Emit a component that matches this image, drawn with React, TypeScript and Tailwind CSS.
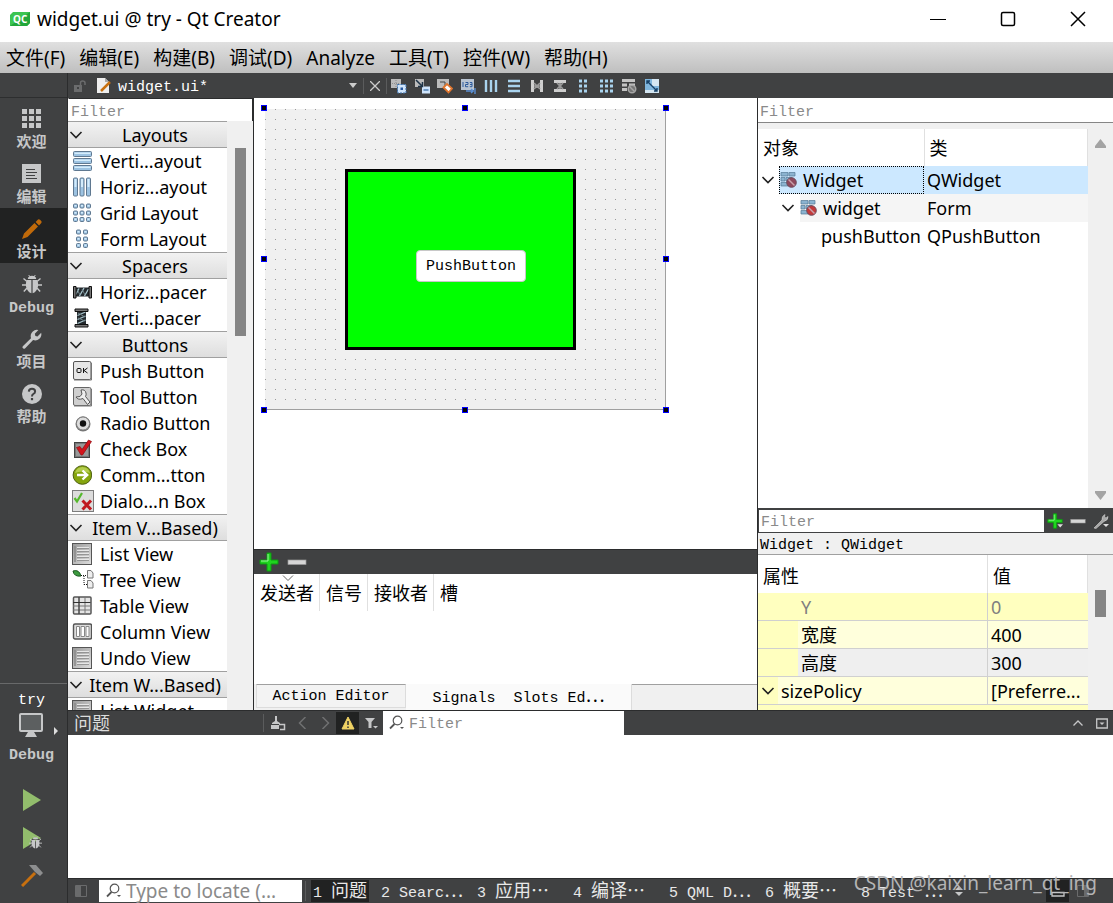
import type { ReactNode } from 'react';

const UI = "font-['Noto_Sans','Noto_Sans_CJK_SC',sans-serif]";
const MONO = "font-['Liberation_Mono','Noto_Sans_CJK_SC',monospace]";

const menus = ['文件(F)', '编辑(E)', '构建(B)', '调试(D)', 'Analyze', '工具(T)', '控件(W)', '帮助(H)'];

const modes = [
  { label: '欢迎', icon: 'welcome' },
  { label: '编辑', icon: 'edit' },
  { label: '设计', icon: 'design' },
  { label: 'Debug', icon: 'debug' },
  { label: '项目', icon: 'projects' },
  { label: '帮助', icon: 'help' },
];

const widgetGroups = [
  {
    title: 'Layouts',
    items: [
      { name: 'Verti...ayout', icon: 'vlayout' },
      { name: 'Horiz...ayout', icon: 'hlayout' },
      { name: 'Grid Layout', icon: 'grid' },
      { name: 'Form Layout', icon: 'form' },
    ],
  },
  {
    title: 'Spacers',
    items: [
      { name: 'Horiz...pacer', icon: 'hspacer' },
      { name: 'Verti...pacer', icon: 'vspacer' },
    ],
  },
  {
    title: 'Buttons',
    items: [
      { name: 'Push Button', icon: 'push' },
      { name: 'Tool Button', icon: 'tool' },
      { name: 'Radio Button', icon: 'radio' },
      { name: 'Check Box', icon: 'check' },
      { name: 'Comm...tton', icon: 'command' },
      { name: 'Dialo...n Box', icon: 'dialog' },
    ],
  },
  {
    title: 'Item V...Based)',
    items: [
      { name: 'List View', icon: 'list' },
      { name: 'Tree View', icon: 'tree' },
      { name: 'Table View', icon: 'table' },
      { name: 'Column View', icon: 'column' },
      { name: 'Undo View', icon: 'list' },
    ],
  },
  {
    title: 'Item W...Based)',
    items: [{ name: 'List Widget', icon: 'list' }],
  },
];

const properties = [
  { name: 'Y', value: '0', level: 1, row: 'bg-[#ffffbf] text-[#808080]', lead: 'bg-[#ffffbf]' },
  { name: '宽度', value: '400', level: 1, row: 'bg-[#ffffdc]', lead: 'bg-[#ffffbf]' },
  { name: '高度', value: '300', level: 1, row: 'bg-[#efefef]', lead: 'bg-[#ffffbf]' },
  { name: 'sizePolicy', value: '[Preferre...', level: 0, row: 'bg-[#ffffdc]', lead: 'bg-[#ffffbf]' },
];

const outputPanes = [
  { num: '2', name: 'Searc' },
  { num: '3', name: '应用' },
  { num: '4', name: '编译' },
  { num: '5', name: 'QML D' },
  { num: '6', name: '概要' },
  { num: '8', name: 'Test ' },
];

const editTools = [
  'editWidgets', 'editSignals', 'editBuddies', 'editTabs', 'layH', 'layV',
  'splitH', 'splitV', 'layForm', 'layGrid', 'breakLayout', 'adjust',
];

const handles = [
  'left-[-4px] top-[-4px]',
  'left-[197px] top-[-4px]',
  'right-[-4px] top-[-4px]',
  'left-[-4px] top-[147px]',
  'right-[-4px] top-[147px]',
  'left-[-4px] bottom-[-4px]',
  'left-[197px] bottom-[-4px]',
  'right-[-4px] bottom-[-4px]',
];

function Svg({ size = 20, box = 20, children }: { size?: number; box?: number; children: ReactNode }) {
  return (
    <svg width={size} height={size} viewBox={`0 0 ${box} ${box}`} fill="none" className="shrink-0" aria-hidden="true">
      {children}
    </svg>
  );
}

function Chevron({ color = '#222' }: { color?: string }) {
  return (
    <svg width="14" height="8" viewBox="0 0 14 8" fill="none" className="shrink-0" aria-hidden="true">
      <path d="M1.5 1 L7 6.5 L12.5 1" stroke={color} strokeWidth="1.6" />
    </svg>
  );
}

function Cells({ xs, ys, w, h }: { xs: number[]; ys: number[]; w: number; h: number }) {
  return (
    <>
      {ys.map((y) =>
        xs.map((x) => (
          <g key={`${x}-${y}`}>
            <rect x={x} y={y} width={w} height={h} rx="1" fill="#9dc3e2" stroke="#5f7890" />
            <rect x={x + 1} y={y + 1} width={w - 2} height={Math.max(1.5, h / 2 - 1)} fill="#d4ecfb" />
          </g>
        ))
      )}
    </>
  );
}

function Bug() {
  return (
    <>
      <path d="M6.5 4.8 Q6.8 3.2 8 2.6 L6.6 1 M13.5 4.8 Q13.2 3.2 12 2.6 L13.4 1" stroke="currentColor" />
      <path d="M5.8 5 Q6.500 1.8 10 1.8 Q13.500 1.8 14.200 5Z" fill="currentColor" />
      <path d="M9.4 6 H4.800 Q3.400 9 4 12.500 Q5.400 18.200 9.400 19.200Z M10.600 6 H15.200 Q16.600 9 16 12.500 Q14.600 18.200 10.600 19.200Z" fill="currentColor" />
      <path d="M5 7.5 L1.5 4.5 M15 7.5 L18.5 4.5 M4.5 11 H0 M15.5 11 H20 M5 14 L1.8 17.5 M15 14 L18.200 17.5" stroke="currentColor" strokeWidth="1.4" />
    </>
  );
}

function ModeIcon({ name }: { name: string }) {
  switch (name) {
    case 'welcome':
      return (
        <Svg>
          {[0, 7, 14].map((y) => [0, 7, 14].map((x) => <rect key={`${x}-${y}`} x={x} y={y} width="5" height="5" fill="#c6c7c8" />))}
        </Svg>
      );
    case 'edit':
      return (
        <Svg>
          <rect width="19" height="19" fill="#c6c7c8" />
          <path d="M4 5.5H13 M4 8.5H15 M4 11.5H13 M4 14.5H15" stroke="#404142" strokeWidth="1.2" />
        </Svg>
      );
    case 'design':
      return (
        <Svg>
          <path d="M0 20 L2 14.5 L12.5 4 L16 7.5 L5.5 18Z M13.6 3 L16 .6 Q17 0 18 .8 L19.4 2.2 Q20 3 19.3 4 L17 6.4Z" fill="#c06a0a" />
        </Svg>
      );
    case 'debug':
      return (
        <Svg>
          <Bug />
        </Svg>
      );
    case 'projects':
      return (
        <Svg>
          <path d="M.8 17.3 L9 9.2 Q7.8 5.2 10.8 2.4 Q13.2 .2 16.4 1.1 L12.8 4.7 L13.4 6.9 L15.5 7.4 L19.2 3.8 Q20 7.4 17.4 9.8 Q14.6 12.2 11.1 11 L3 19.4 Q1.5 20 .7 19 Q.1 18.2 .8 17.3Z" fill="#c6c7c8" />
        </Svg>
      );
    default:
      return (
        <Svg>
          <circle cx="10" cy="10" r="10" fill="#c6c7c8" />
          <path d="M6.8 7.6 Q7 4.8 10 4.8 Q13.1 4.8 13.1 7.4 Q13.1 9 11.3 10 Q10 10.8 10 12.4" stroke="#404142" strokeWidth="2" />
          <rect x="8.9" y="14" width="2.2" height="2.2" fill="#404142" />
        </Svg>
      );
  }
}

function WidgetIcon({ name }: { name: string }) {
  switch (name) {
    case 'vlayout':
      return (
        <Svg>
          <Cells xs={[1.5]} ys={[0.5, 7.5, 14.5]} w={18} h={5} />
        </Svg>
      );
    case 'hlayout':
      return (
        <Svg>
          <Cells xs={[1.5, 8, 14.5]} ys={[1]} w={4} h={18} />
        </Svg>
      );
    case 'grid':
      return (
        <Svg>
          <Cells xs={[1.5, 8, 14.5]} ys={[1, 8, 14.5]} w={4} h={4} />
        </Svg>
      );
    case 'form':
      return (
        <Svg>
          <Cells xs={[4.5, 11.5]} ys={[1, 8, 14.5]} w={4} h={4} />
        </Svg>
      );
    case 'hspacer':
      return (
        <Svg>
          <path d="M3 5.500H17.500V14.500H3Z" fill="#23292d" />
          <path d="M3.500 13L7 6.500 M7.500 14L12 6 M12.500 14L16.500 7" stroke="#a9c6ce" strokeWidth="1.300" />
          <path d="M5 7L8 13 M10 7L13 13" stroke="#6f8288" />
          <path d="M1.500 4.500H4V16H1.500Z M17 4.500H19.500V16H17Z" fill="#777" stroke="#111" />
        </Svg>
      );
    case 'vspacer':
      return (
        <Svg>
          <path d="M5 3H14V17H5Z" fill="#23292d" />
          <path d="M5.500 7.500L13.500 4 M5.500 11.500L13.500 8 M5.500 15.500L13.500 12" stroke="#a9c6ce" strokeWidth="1.300" />
          <path d="M6 5L13 9 M6 10L13 13" stroke="#6f8288" />
          <path d="M3 1H16V3.500H3Z M3 16.500H16V19H3Z" fill="#777" stroke="#111" />
        </Svg>
      );
    case 'push':
      return (
        <Svg>
          <rect x="1.5" y=".5" width="17.5" height="18" rx="1.5" fill="#e6e6e6" stroke="#555" />
          <path d="M2 19H19.5V2" stroke="#777" />
          <rect x="5" y="7.5" width="4" height="4" rx="1" stroke="#111" />
          <path d="M11.5 7V12 M15.5 7L12 9.5L15.5 12" stroke="#111" />
        </Svg>
      );
    case 'tool':
      return (
        <Svg>
          <rect x="1.5" y=".5" width="17.5" height="18" rx="1.5" fill="#cfcfcf" stroke="#666" />
          <path d="M2 19H19.5V2" stroke="#777" />
          <path d="M9 3 Q13 2 14 6 Q14.5 8 13.5 9.5 L18 15 L15.5 17.5 L11 11.5 Q6 13.5 4 10 L8 9.5 L10 7Z" fill="#eee" stroke="#555" />
        </Svg>
      );
    case 'radio':
      return (
        <Svg>
          <circle cx="11" cy="11" r="7.5" fill="#777" />
          <circle cx="11" cy="10.5" r="6.6" fill="#ddd" stroke="#777" />
          <circle cx="11" cy="10.5" r="3.2" fill="#111" />
        </Svg>
      );
    case 'check':
      return (
        <Svg>
          <rect x="2.5" y="3.5" width="15" height="15" fill="#777" stroke="#444" />
          <rect x="4" y="5" width="12" height="12" fill="#999" />
          <path d="M4.5 8.5 L8 7.5 L10 10.5 L16.5 1 L19.5 2.5 L10.5 16 L9 16Z" fill="#d3141c" stroke="#8c0d12" strokeWidth=".7" />
        </Svg>
      );
    case 'command':
      return (
        <Svg>
          <circle cx="10.4" cy="10" r="9.3" fill="#85a50e" stroke="#4e5f12" />
          <path d="M3 8 Q4.5 2.2 10.4 2 Q16.4 2.2 18 8 Q10 5 3 8Z" fill="#b4cd4e" />
          <path d="M5 10H14.5 M10.5 5.5L15.2 10L10.5 14.5" stroke="#fff" strokeWidth="2.4" />
        </Svg>
      );
    case 'dialog':
      return (
        <Svg size={22} box={22}>
          <rect x=".5" y=".5" width="21" height="21" fill="#dcdcdc" stroke="#7c7c7c" />
          <path d="M2.5 8 L5 11.5 L10 3" stroke="#55b82c" strokeWidth="2.2" />
          <path d="M10.5 10.5 L19 19.5 M19 10.5 L10.5 19.5" stroke="#c01820" strokeWidth="3" />
        </Svg>
      );
    case 'tree':
      return (
        <Svg size={22} box={22}>
          <path d="M1 2 Q7 0 9 7 Q2 8 1 2Z" fill="#3c9a3f" stroke="#1c5a22" />
          <path d="M9 6.5H14 M12 7V15.5 M12 15.5H15" stroke="#111" strokeDasharray="1 1" />
          <path d="M15.5 1.5H19L21 4V9H15.5Z M15.5 11.5H19L21 14V19H15.5Z" fill="#eee" stroke="#777" />
        </Svg>
      );
    case 'table':
      return (
        <Svg>
          <rect x="1.5" y="1" width="17.5" height="17" rx="1" fill="#e4e4e4" stroke="#555" strokeWidth="1.5" />
          <path d="M1 6.5H18.5 M1 10H18.5 M1 14H18.5 M7 1V18 M13 1V18" stroke="#777" />
          <path d="M1 6.5H18.5 M7 1V18" stroke="#333" />
        </Svg>
      );
    case 'column':
      return (
        <Svg>
          <rect x="1.5" y="2" width="18" height="15" rx="1.5" fill="#ddd" stroke="#555" strokeWidth="1.4" />
          <path d="M4.5 4.5H7.5V14.5H4.5Z M9 4.5H12.5V14.5H9Z M14 4.5H17V14.5H14Z" fill="#fff" stroke="#888" />
        </Svg>
      );
    default:
      return (
        <Svg size={22} box={22}>
          <defs>
            <linearGradient id="listShade" x1="0" y1="0" x2="1" y2="1">
              <stop offset="0" stopColor="#9a9a9a" />
              <stop offset="1" stopColor="#dedede" />
            </linearGradient>
          </defs>
          <rect x=".5" y=".5" width="19" height="21" fill="url(#listShade)" stroke="#555" />
          <path d="M3 3V19" stroke="#888" strokeWidth="1.4" />
          <path d="M5 4.5H17 M5 7.5H17 M5 10.5H17 M5 13.5H17 M5 16.5H17" stroke="#e6e6e6" />
          <path d="M5 5.5H17 M5 8.5H17 M5 11.5H17 M5 14.5H17 M5 17.5H17" stroke="#8a8a8a" strokeWidth=".8" />
        </Svg>
      );
  }
}

function EditIcon({ name }: { name: string }) {
  const blue = '#a9d3ee';
  switch (name) {
    case 'editWidgets':
      return (
        <>
          <path d="M0 1H10V10H0Z" fill="#bcbcbc" />
          <path d="M1 5.500H9 M5 2V9" stroke="#8f8f8f" strokeDasharray="1 1" />
          <path d="M6.5 6.5H15V15H6.5Z" fill="#cfe4fb" stroke="#3a6ea8" strokeDasharray="2 1" />
          <rect x="9.5" y="9.5" width="2.5" height="2.5" fill="#2457a0" />
        </>
      );
    case 'editSignals':
      return (
        <>
          <path d="M1 1H10V9H1Z" fill="#bcbcbc" />
          <path d="M8 8.500H16V15.500H8Z" fill="#cfe4fb" />
          <path d="M9.500 12H14.500" stroke="#3a6ea8" strokeWidth="1.300" />
          <path d="M2 2 L8.500 8.500 M8.500 4V8.500H4" stroke="#1d3348" strokeWidth="1.500" />
        </>
      );
    case 'editBuddies':
      return (
        <>
          <path d="M0 1H12V10H0Z" fill="#bcbcbc" />
          <path d="M3 4H8V8" stroke="#444" />
          <path d="M6.5 9.5 L10 6 L15 10.5 L11.5 14.5Z" fill="#fff" stroke="#e0762e" strokeWidth="1.8" />
        </>
      );
    case 'editTabs':
      return (
        <>
          <path d="M1 1H14V12H1Z" fill="#b9c4d2" />
          <path d="M3 4V9 M5.5 4.5H8V6.5H5.5V8.7H8.2 M9.8 4.5H12V8.7H9.8 M10 6.5H12" stroke="#2c5a9c" />
          <path d="M6 13H13 M11 11L13.2 13L11 15 M15 10V16" stroke="#5a8fd4" strokeWidth="1.4" />
        </>
      );
    case 'layH':
      return <path d="M3 2V14 M8 2V14 M13 2V14" stroke={blue} strokeWidth="2.4" />;
    case 'layV':
      return <path d="M2 3H14 M2 8H14 M2 13H14" stroke={blue} strokeWidth="2.4" />;
    case 'splitH':
      return (
        <>
          <path d="M2 2H5V14H2Z M11 2H14V14H11Z" fill="#cfcfcf" />
          <path d="M5 5L8 8L5 11 M11 5L8 8L11 11 M5 8H11" stroke="#9a9a9a" strokeWidth="1.6" />
        </>
      );
    case 'splitV':
      return (
        <>
          <path d="M2 2H14V5H2Z M2 11H14V14H2Z" fill="#cfcfcf" />
          <path d="M5 5L8 8L11 5 M5 11L8 8L11 11 M8 5V11" stroke="#9a9a9a" strokeWidth="1.6" />
        </>
      );
    case 'layForm':
      return <path d="M4 3H7 M9 3H12 M4 8H7 M9 8H12 M4 13H7 M9 13H12" stroke={blue} strokeWidth="3" />;
    case 'layGrid':
      return <path d="M2 3H5 M7 3H10 M12 3H15 M2 8H5 M7 8H10 M12 8H15 M2 13H5 M7 13H10 M12 13H15" stroke={blue} strokeWidth="3" />;
    case 'breakLayout':
      return (
        <>
          <path d="M1 2.5H14 M1 7H6 M8 7H14 M1 11.5H6" stroke="#c4c4c4" strokeWidth="3" />
          <circle cx="11" cy="11" r="3.8" fill="#777" stroke="#a6a6a6" strokeWidth="1.4" />
          <path d="M8.5 8.5L13.5 13.5" stroke="#a6a6a6" strokeWidth="1.4" />
        </>
      );
    default:
      return (
        <>
          <path d="M1 1H15V15H1Z" fill="#7fb6de" />
          <path d="M8 1H15V8H8Z M1 12H15V15H1Z" fill="#d4e6f2" />
          <path d="M3 3L13 13 M3 6V3H6 M13 10V13H10" stroke="#153f66" strokeWidth="1.4" />
        </>
      );
  }
}

function ObjectIcon({ tint }: { tint: string }) {
  return (
    <Svg size={18} box={18}>
      <path d="M1 1.5H8V5H1Z M9 1.5H15V5H9Z M1 6.5H5V10H1Z M6 6.5H12V10H6Z M1 11.5H8V15H1Z" fill="#8bb3d0" stroke="#557a96" strokeWidth=".7" />
      <circle cx="11.5" cy="11.5" r="4.8" fill={tint} stroke="#6c4a5c" />
      <path d="M8.5 8.5L14.5 14.5" stroke="#c9a2ac" strokeWidth="1.4" />
    </Svg>
  );
}

function Search() {
  return (
    <Svg size={18} box={18}>
      <circle cx="9.5" cy="6.5" r="4.3" stroke="#555" strokeWidth="1.2" />
      <path d="M6.5 10L2 14.5" stroke="#555" strokeWidth="1.8" />
      <path d="M12 13H16L14 15Z" fill="#555" />
    </Svg>
  );
}

function Plus({ size = 20, arrow = false }: { size?: number; arrow?: boolean }) {
  return (
    <Svg size={size}>
      <path d="M8 1H12V8H19V12H12V19H8V12H1V8H8Z" fill="#1fd41f" stroke="#0c9c10" />
      <path d="M9 2V9H2" stroke="#9cf59c" />
      {arrow && <path d="M13 14H20L16.5 18Z" fill="#ddd" />}
    </Svg>
  );
}

function Minus({ size = 20 }: { size?: number }) {
  return (
    <Svg size={size}>
      <rect x="1" y="8" width="18" height="4.5" fill="#d6d6d6" stroke="#999" strokeWidth=".7" />
    </Svg>
  );
}

function TitleBar() {
  return (
    <header className="flex h-[42px] shrink-0 items-center bg-white pb-1 pl-2.5">
      <svg width="20" height="14" viewBox="0 0 20 14" className="mr-[7px] shrink-0" aria-hidden="true">
        <path d="M3 0H20V11L17 14H0V3Z" fill="#3cc451" />
        <path d="M0 14L20 0V11L17 14Z" fill="#22a63a" />
        <text x="3" y="11" fontSize="10" fontWeight="bold" fill="#fff" fontFamily="Noto Sans">QC</text>
      </svg>
      <h1 className="flex-1 text-[19px] leading-6">widget.ui @ try - Qt Creator</h1>
      <button aria-label="Minimize" className="flex h-full w-[70px] items-center justify-center">
        <Svg size={16} box={16}><path d="M0 8.5H16" stroke="#000" /></Svg>
      </button>
      <button aria-label="Maximize" className="flex h-full w-[70px] items-center justify-center">
        <Svg size={16} box={16}><rect x="1.5" y="1.5" width="13" height="13" rx="1.5" stroke="#000" strokeWidth="1.5" /></Svg>
      </button>
      <button aria-label="Close" className="flex h-full w-[70px] items-center justify-center">
        <Svg size={16} box={16}><path d="M1 1L15 15M15 1L1 15" stroke="#000" strokeWidth="1.5" /></Svg>
      </button>
    </header>
  );
}

function ModeBar() {
  return (
    <aside className={`flex w-[68px] shrink-0 flex-col border-r border-[#2b2c2d] bg-[#404142] font-bold text-[#c6c7c8] ${MONO}`}>
      <div className="h-[25px] shrink-0 border-b border-[#2d2e2f]" />
      <nav className="flex flex-col">
        {modes.map((mode) => (
          <button
            key={mode.label}
            className={`flex h-[55px] flex-col items-center gap-1 pr-1 pt-[11px] text-[15px] leading-[22px] ${
              mode.icon === 'design' ? 'bg-[#212222]' : ''
            }`}
          >
            <ModeIcon name={mode.icon} />
            {mode.label}
          </button>
        ))}
      </nav>
      <div className="mt-auto flex shrink-0 flex-col items-center border-t border-[#68696a] pr-1 pt-1.5 text-[15px]">
        <span className="font-normal leading-[22px] text-white">try</span>
        <button className="relative mt-px flex flex-col items-center gap-2 leading-[22px]">
          <svg width="24" height="24" viewBox="0 0 24 24" aria-hidden="true">
            <rect x="1" y="1" width="22" height="17" rx="1" fill="#5c5f60" stroke="#c6c7c8" strokeWidth="2" />
            <path d="M9 19H15L18 24H6Z" fill="#c6c7c8" />
          </svg>
          <svg className="absolute -right-1 top-[14px]" width="4" height="8" viewBox="0 0 4 8" aria-hidden="true">
            <path d="M0 0L4 4L0 8Z" fill="#ddd" />
          </svg>
          Debug
        </button>
        <button aria-label="Run" className="mt-[22px]">
          <Svg size={22} box={22}><path d="M2 0L20 11L2 22Z" fill="#92bd6c" /></Svg>
        </button>
        <button aria-label="Start Debugging" className="mt-4">
          <Svg size={22} box={22}>
            <path d="M2 0L20 11L2 22Z" fill="#92bd6c" />
            <g transform="translate(8 9) scale(.65)" stroke="#404142" strokeWidth="3"><circle cx="10" cy="10" r="6" /></g>
            <g transform="translate(8 9) scale(.65)"><Bug /></g>
          </Svg>
        </button>
        <button aria-label="Build" className="mb-4 mt-4">
          <Svg size={22} box={22}>
            <path d="M1 21L14 8" stroke="#c8700f" strokeWidth="3" />
            <path d="M8 0H15L22 8L19 11L14 7Z" fill="#8d8e8f" />
          </Svg>
        </button>
      </div>
    </aside>
  );
}

function DocumentBar() {
  return (
    <div className="flex h-[25px] shrink-0 items-center bg-[#404142]">
      <div className="flex w-[295px] items-center px-1.5">
        <Svg size={12} box={12}>
          <path d="M0 5H8V12H0Z" fill="#6b6c6d" />
          <path d="M6.5 5V3Q6.5 1 8.5 1Q11 1 11 3V5" stroke="#6b6c6d" strokeWidth="1.5" />
          <rect x="3" y="7" width="2" height="2" fill="#404142" />
        </Svg>
        <span className="ml-2.5">
          <Svg size={15} box={15}>
            <path d="M1 0H9L13 4V15H1Z" fill="#eee" />
            <path d="M9 0V4H13Z" fill="#aaa" />
            <path d="M5 13L14 4" stroke="#c8700f" strokeWidth="2.5" />
          </Svg>
        </span>
        <button className={`flex flex-1 items-center justify-between pl-[7px] text-[15px] leading-6 text-white ${MONO}`}>
          <span className="pt-1">widget.ui*</span>
          <svg width="8" height="5" viewBox="0 0 8 5" aria-hidden="true"><path d="M0 0H8L4 5Z" fill="#ccc" /></svg>
        </button>
      </div>
      <button aria-label="Close document" className="flex h-4 w-6 items-center justify-center border-x border-[#5b5c5d]">
        <Svg size={10} box={10}><path d="M0 0L10 10M10 0L0 10" stroke="#ccc" strokeWidth="1.3" /></Svg>
      </button>
      <div className="flex gap-[7px] pl-1">
        {editTools.map((tool) => (
          <button key={tool} aria-label={tool}>
            <Svg size={16} box={16}>
              <EditIcon name={tool} />
            </Svg>
          </button>
        ))}
      </div>
    </div>
  );
}

function WidgetBox() {
  return (
    <section className="flex w-[185px] shrink-0 flex-col overflow-hidden bg-white">
      <input
        aria-label="Filter widgets"
        placeholder="Filter"
        className={`h-6 shrink-0 border border-[#2b2c2d] border-l-transparent bg-white px-0.5 pt-1 text-[15px] outline-none placeholder:text-[#8a8a8a] ${MONO}`}
      />
      <div className="-mt-px flex min-h-0 flex-1">
        <div className="w-[159px] shrink-0 overflow-hidden">
          {widgetGroups.map((group) => (
            <div key={group.title}>
              <button className="flex h-[27px] w-full items-center border-b border-t border-[#a0a0a0] bg-linear-to-b from-[#f2f2f2] to-[#dedede] pl-px text-[18px] leading-6">
                <Chevron />
                <span className="flex-1 whitespace-nowrap text-center">{group.title}</span>
              </button>
              <ul>
                {group.items.map((item) => (
                  <li key={item.name} className="flex h-[26px] items-center text-[18px] leading-6">
                    <span className="flex w-8 shrink-0 pl-1"><WidgetIcon name={item.icon} /></span>
                    <span className="whitespace-nowrap">{item.name}</span>
                  </li>
                ))}
              </ul>
            </div>
          ))}
        </div>
        <div className="flex flex-1 justify-center bg-[#f0f0f0] pt-[27px]">
          <div className="h-[188px] w-[11px] bg-[#858585]" />
        </div>
      </div>
    </section>
  );
}

function FormCanvas() {
  return (
    <div className="min-h-0 flex-1 overflow-hidden bg-white">
      <div className="relative ml-[11px] mt-[11px] h-[301px] w-[401px] border-b border-r border-[#a0a0a0] bg-[#f0f0f0] bg-[conic-gradient(from_270deg_at_1px_1px,#9a9a9a_90deg,transparent_0)] bg-[length:10px_10px]">
        <div className="absolute left-20 top-[60px] h-[181px] w-[231px] border-[3px] border-black bg-[#00ff00]">
          <button className={`absolute left-[68px] top-[78px] h-8 w-[110px] rounded border border-[#c8c8c8] bg-white pt-0.5 text-[15px] ${MONO}`}>
            PushButton
          </button>
        </div>
        {handles.map((pos) => (
          <span key={pos} className={`absolute size-1.5 border border-[#0000ff] bg-black ${pos}`} />
        ))}
      </div>
    </div>
  );
}

function SignalEditor() {
  return (
    <>
      <div className="flex h-[25px] shrink-0 items-center gap-2 border-t border-[#2b2c2d] bg-[#404142] pl-[5px]">
        <button aria-label="Add connection"><Plus /></button>
        <button aria-label="Remove connection"><Minus /></button>
      </div>
      <div className="relative h-[110px] shrink-0 bg-white">
        <svg className="absolute left-7 top-px" width="12" height="6" viewBox="0 0 12 6" fill="none" aria-hidden="true">
          <path d="M1 .5L6 5.5L11 .5" stroke="#666" />
        </svg>
        <table className="text-[18px] leading-6">
          <thead>
            <tr className="h-[37px]">
              <th className="border-r border-[#e0e0e0] pl-1.5 pr-[5px] font-normal">发送者</th>
              <th className="border-r border-[#e0e0e0] pl-1.5 pr-[5px] font-normal">信号</th>
              <th className="border-r border-[#e0e0e0] pl-1.5 pr-[5px] font-normal">接收者</th>
              <th className="pl-1.5 font-normal">槽</th>
            </tr>
          </thead>
        </table>
      </div>
      <div className={`flex h-[26px] shrink-0 bg-[#f0f0f0] text-[15px] leading-6 ${MONO}`}>
        <button className="ml-0.5 h-6 w-[150px] border border-[#dcdcdc] border-t-[#a0a0a0] bg-[#f3f3f3] pt-px leading-[22px]">Action Editor</button>
        <button className="w-[226px] whitespace-pre border-r border-[#dcdcdc] bg-[#fafafa] pt-px">
          Signals  Slots Ed<span className="font-['Noto_Sans_CJK_SC',sans-serif] text-[18px] leading-none">⋯</span>
        </button>
        <div className="flex-1 border-t border-[#a0a0a0]" />
      </div>
    </>
  );
}

function ObjectInspector() {
  return (
    <div className="flex min-h-0 flex-1 flex-col bg-[#f0f0f0]">
      <input
        aria-label="Filter objects"
        placeholder="Filter"
        className={`h-[25px] w-full shrink-0 border-b border-[#868686] bg-white px-0.5 pt-1 text-[15px] outline-none placeholder:text-[#8a8a8a] ${MONO}`}
      />
      <div className="mt-1.5 flex min-h-0 flex-1">
        <div className="flex-1 bg-white">
          <table className="w-full table-fixed text-[18px] leading-6">
            <colgroup>
              <col className="w-[166px]" />
              <col />
            </colgroup>
            <thead>
              <tr className="h-[37px] text-left">
                <th className="border-r border-[#e0e0e0] pl-[5px] font-normal">对象</th>
                <th className="border-r border-[#e0e0e0] pl-[5px] font-normal">类</th>
              </tr>
            </thead>
            <tbody>
              <tr className="h-7">
                <td>
                  <div className="flex items-center gap-1 pl-[3px]">
                    <Chevron />
                    <span className="flex h-7 flex-1 items-center gap-[5px] border border-dotted border-black bg-[#cce8ff]">
                      <ObjectIcon tint="#8e4a5e" />
                      Widget
                    </span>
                  </div>
                </td>
                <td className="bg-[#cce8ff] pl-[3px]">QWidget</td>
              </tr>
              <tr className="h-7">
                <td>
                  <div className="flex items-center gap-[5px] pl-[23px]">
                    <Chevron />
                    <span className="flex h-7 flex-1 items-center gap-[5px] bg-[#f5f5f5]">
                      <ObjectIcon tint="#c43a3a" />
                      widget
                    </span>
                  </div>
                </td>
                <td className="bg-[#f5f5f5] pl-[3px]">Form</td>
              </tr>
              <tr className="h-7">
                <td className="whitespace-nowrap pl-[63px]">pushButton</td>
                <td className="pl-[3px]">QPushButton</td>
              </tr>
            </tbody>
          </table>
        </div>
        <div className="flex w-[25px] flex-col items-center justify-between bg-[#f0f0f0] pb-2 pt-2.5">
          <svg width="11" height="9" viewBox="0 0 11 9" aria-hidden="true"><path d="M5.5 0L11 7V9H0V7Z" fill="#a3a3a3" /></svg>
          <svg width="11" height="9" viewBox="0 0 11 9" aria-hidden="true"><path d="M5.5 9L11 2V0H0V2Z" fill="#a3a3a3" /></svg>
        </div>
      </div>
    </div>
  );
}

function PropertyEditor() {
  return (
    <div className="flex h-[202px] shrink-0 flex-col overflow-hidden bg-[#f0f0f0]">
      <div className="flex h-[25px] shrink-0 items-center bg-[#404142] pt-px">
        <input
          aria-label="Filter properties"
          placeholder="Filter"
          className={`ml-px h-[22px] min-w-0 flex-1 bg-white px-0.5 pt-1 text-[15px] outline-none placeholder:text-[#8a8a8a] ${MONO}`}
        />
        <div className="flex gap-[7px] pl-[3px] pr-1">
          <button aria-label="Add property"><Plus size={16} arrow /></button>
          <button aria-label="Remove property"><Minus size={16} /></button>
          <button aria-label="Configure">
            <Svg size={16} box={16}>
              <path d="M1 15L9 7Q8.5 3 12 1.5L11.5 4L13 5L15 3.5Q15.5 7 11 8.5L3 15.5Z" fill="#a8a8a8" stroke="#d0d0d0" strokeWidth=".6" />
              <path d="M10 11H16L13 14Z" fill="#ddd" />
            </Svg>
          </button>
        </div>
      </div>
      <p className={`h-[22px] shrink-0 border-b border-[#a0a0a0] px-0.5 pt-0.5 text-[15px] leading-[22px] ${MONO}`}>Widget : QWidget</p>
      <div className="flex min-h-0 flex-1">
        <div className="flex-1 overflow-hidden bg-[#ffffbf]">
          <table className="w-full table-fixed border-separate border-spacing-0 text-[18px] leading-6">
            <colgroup>
              <col className="w-[230px]" />
              <col />
            </colgroup>
            <thead>
              <tr className="h-[38px] bg-white text-left">
                <th className="border-r border-[#e0e0e0] pl-[5px] pt-[3px] font-normal">属性</th>
                <th className="border-r border-[#e0e0e0] pl-[5px] pt-[3px] font-normal">值</th>
              </tr>
            </thead>
            <tbody>
              {properties.map((prop) => (
                <tr key={prop.name} className={`h-7 ${prop.row}`}>
                  <td className="border-b border-r border-[#d0d0d0] p-0">
                    <div className="flex h-[27px] items-center">
                      <span className={`flex h-full shrink-0 items-center pl-[3px] ${prop.level ? 'w-10' : 'w-5'} ${prop.lead}`}>
                        {prop.level === 0 && <Chevron />}
                      </span>
                      <span className="pl-[3px]">{prop.name}</span>
                    </div>
                  </td>
                  <td className="whitespace-nowrap border-b border-[#d0d0d0] pl-[3px]">{prop.value}</td>
                </tr>
              ))}
            </tbody>
          </table>
        </div>
        <div className="flex w-[25px] justify-center bg-[#f0f0f0] pt-[35px]">
          <div className="h-[27px] w-[11px] bg-[#858585]" />
        </div>
      </div>
    </div>
  );
}

function IssuesPane() {
  return (
    <section className="shrink-0">
      <div className="flex h-[25px] items-center border-t border-[#2b2c2d] bg-[#404142]">
        <h2 className="w-[195px] pl-1.5 text-[18px] leading-6 text-[#dcdcdc]">问题</h2>
        <div className="flex h-full flex-none items-center">
          <button aria-label="Clear" className="flex h-[18px] w-[29px] items-center justify-center border-l border-[#5b5c5d]">
            <Svg size={16} box={16}>
              <path d="M5 1H7V6L10 8V9H2V8L5 6Z M1 10H9V14H1Z" fill="#c6c7c8" />
              <path d="M9 9.5H14.5V14.5H10" stroke="#c6c7c8" strokeWidth="1.5" />
            </Svg>
          </button>
          <button aria-label="Previous item" className="flex w-[22px] justify-center">
            <Svg size={12} box={12}><path d="M8.5 0L2.5 6L8.5 12" stroke="#6f7071" strokeWidth="1.5" /></Svg>
          </button>
          <button aria-label="Next item" className="flex w-[22px] justify-center">
            <Svg size={12} box={12}><path d="M3.5 0L9.5 6L3.5 12" stroke="#6f7071" strokeWidth="1.5" /></Svg>
          </button>
          <button aria-label="Show warnings" className="flex h-[22px] w-[23px] items-center justify-center bg-[#212222]">
            <Svg size={14} box={14}>
              <path d="M7 1L13 13H1Z" fill="#f0d264" stroke="#f0d264" />
              <path d="M7 5V9 M7 10.5V12" stroke="#333" strokeWidth="1.5" />
            </Svg>
          </button>
          <button aria-label="Filter by category" className="flex w-6 justify-center">
            <Svg size={14} box={14}>
              <path d="M1 2H11L7.5 6V12H4.5V6Z" fill="#c6c7c8" />
              <path d="M9 10H14L11.5 12.5Z" fill="#c6c7c8" />
            </Svg>
          </button>
        </div>
        <label className="flex h-full w-[241px] items-center bg-white pl-[5px]">
          <Search />
          <input
            aria-label="Filter issues"
            placeholder="Filter"
            className={`w-full min-w-0 bg-transparent pl-[3px] pt-1 text-[15px] outline-none placeholder:text-[#8a8a8a] ${MONO}`}
          />
        </label>
        <div className="ml-auto flex items-center gap-3 pr-[5px]">
          <button aria-label="Maximize pane">
            <Svg size={12} box={12}><path d="M1.5 8.5L6 4L10.5 8.5" stroke="#c6c7c8" strokeWidth="1.3" /></Svg>
          </button>
          <button aria-label="Close pane">
            <Svg size={12} box={12}>
              <path d="M.7 2H11.3V11H.7Z" stroke="#c6c7c8" strokeWidth="1.3" />
              <path d="M3.5 5.5H8.5L6 8Z" fill="#c6c7c8" />
            </Svg>
          </button>
        </div>
      </div>
      <div className="h-[143px] bg-white" />
    </section>
  );
}

function StatusBar() {
  return (
    <footer className="relative flex h-[25px] shrink-0 items-center border-t border-[#2b2c2d] bg-[#404142] text-[#e8e8e8]">
      <button aria-label="Toggle left sidebar" className="w-[31px] shrink-0 pl-[7px]">
        <Svg size={12} box={12}><path d="M.5 .5H11.5V11.5H.5Z" stroke="#6a6b6c" /><path d="M1 1H6V11H1Z" fill="#6a6b6c" /></Svg>
      </button>
      <label className="flex h-[22px] w-[203px] shrink-0 items-center bg-white pl-1.5">
        <Search />
        <input
          aria-label="Locator"
          placeholder="Type to locate (..."
          className="w-full min-w-0 bg-transparent pl-[3px] text-[19px] leading-6 outline-none placeholder:text-[#8a8a8a]"
        />
      </label>
      <div className="ml-[3px] mr-[5px] h-5 w-px shrink-0 bg-[#5b5c5d]" />
      <button className={`mr-1 h-[22px] w-[58px] shrink-0 whitespace-pre bg-[#212222] pt-0.5 text-[15px] leading-[22px] ${MONO}`}>
        1 <span className="text-[18px] leading-5">问题</span>
      </button>
      {outputPanes.map((pane) => (
        <button key={pane.num} className={`w-24 shrink-0 whitespace-pre pl-2 pt-0.5 text-left text-[15px] leading-[22px] ${MONO}`}>
          {pane.num} <span className={/^[A-Z]/.test(pane.name) ? '' : 'text-[18px] leading-5'}>{pane.name}</span>
          <span className="font-['Noto_Sans_CJK_SC',sans-serif] text-[18px] leading-5">⋯</span>
        </button>
      ))}
      <button aria-label="More panes" className="shrink-0 pl-1">
        <Svg size={12} box={12}><path d="M2 5L6 1L10 5Z M2 7L6 11L10 7Z" fill="#c6c7c8" /></Svg>
      </button>
      <div className="ml-auto flex shrink-0 items-center gap-2 pr-6">
        <span className="flex h-[22px] w-[23px] items-center justify-center bg-[#212222]">
          <Svg size={14} box={14}><path d="M1 8.5H13V12H1Z" stroke="#c6c7c8" strokeWidth="1.3" /></Svg>
        </span>
        <Svg size={12} box={12}><path d="M.5 .5H11.5V11.5H.5Z" stroke="#6a6b6c" /><path d="M7 1H11V11H7Z" fill="#6a6b6c" /></Svg>
      </div>
      <span className="pointer-events-none absolute -top-2 right-4 whitespace-nowrap text-[19px] leading-6 text-[#b4b4b5]">
        CSDN @kaixin_learn_qt_ing
      </span>
    </footer>
  );
}

export default function App() {
  return (
    <div className={`flex h-screen flex-col overflow-hidden bg-white text-black ${UI}`}>
      <TitleBar />
      <nav className="flex h-[31px] shrink-0 items-center gap-3.5 bg-linear-to-b from-[#e0e0e0] to-[#bfbfbf] pl-1.5 text-[19px] leading-6">
        {menus.map((menu) => (
          <button key={menu} className="whitespace-nowrap">{menu}</button>
        ))}
      </nav>
      <div className="flex min-h-0 flex-1">
        <ModeBar />
        <main className="flex min-w-0 flex-1 flex-col">
          <DocumentBar />
          <div className="flex min-h-0 flex-1">
            <WidgetBox />
            <section className="flex min-w-0 flex-1 flex-col border-x border-[#2b2c2d]">
              <FormCanvas />
              <SignalEditor />
            </section>
            <section className="flex w-[355px] shrink-0 flex-col">
              <ObjectInspector />
              <PropertyEditor />
            </section>
          </div>
          <IssuesPane />
          <StatusBar />
        </main>
      </div>
    </div>
  );
}
